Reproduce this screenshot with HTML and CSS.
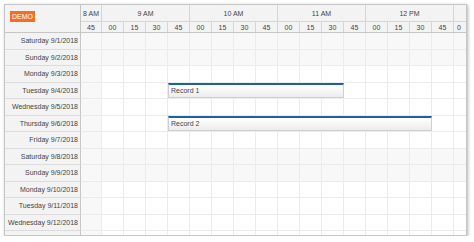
FILE: index.html
```html
<!DOCTYPE html>
<html lang="en">
<head>
<meta charset="UTF-8">
<title>Scheduler</title>
<link rel="stylesheet" href="styles.css">
</head>
<body>
  <div class="scheduler">
    <div class="header">
      <div class="corner"><span class="demo">DEMO</span></div>
      <div class="timeline-head">
        <div class="hours">
          <div class="cell w21">8 AM</div>
          <div class="cell hour">9 AM</div>
          <div class="cell hour">10 AM</div>
          <div class="cell hour">11 AM</div>
          <div class="cell hour">12 PM</div>
          <div class="cell rest"></div>
        </div>
        <div class="minutes">
          <div class="cell w21">45</div>
          <div class="cell">00</div><div class="cell">15</div><div class="cell">30</div><div class="cell">45</div>
          <div class="cell">00</div><div class="cell">15</div><div class="cell">30</div><div class="cell">45</div>
          <div class="cell">00</div><div class="cell">15</div><div class="cell">30</div><div class="cell">45</div>
          <div class="cell">00</div><div class="cell">15</div><div class="cell">30</div><div class="cell">45</div>
          <div class="cell rest">0</div>
        </div>
      </div>
    </div>

    <div class="row weekend"><div class="label">Saturday 9/1/2018</div><div class="lane"></div></div>
    <div class="row weekend"><div class="label">Sunday 9/2/2018</div><div class="lane"></div></div>
    <div class="row"><div class="label">Monday 9/3/2018</div><div class="lane"></div></div>
    <div class="row">
      <div class="label">Tuesday 9/4/2018</div>
      <div class="lane"><div class="event" style="left: 87px; width: 176px;">Record 1</div></div>
    </div>
    <div class="row"><div class="label">Wednesday 9/5/2018</div><div class="lane"></div></div>
    <div class="row">
      <div class="label">Thursday 9/6/2018</div>
      <div class="lane"><div class="event" style="left: 87px; width: 264px;">Record 2</div></div>
    </div>
    <div class="row"><div class="label">Friday 9/7/2018</div><div class="lane"></div></div>
    <div class="row weekend"><div class="label">Saturday 9/8/2018</div><div class="lane"></div></div>
    <div class="row weekend"><div class="label">Sunday 9/9/2018</div><div class="lane"></div></div>
    <div class="row"><div class="label">Monday 9/10/2018</div><div class="lane"></div></div>
    <div class="row"><div class="label">Tuesday 9/11/2018</div><div class="lane"></div></div>
    <div class="row"><div class="label">Wednesday 9/12/2018</div><div class="lane"></div></div>
    <div class="row"><div class="label"></div><div class="lane"></div></div>
  </div>
</body>
</html>
```

FILE: styles.css
```css
body {
  margin: 0;
  background-color: #fff;
}
.scheduler {
  margin: 4px 0 0 4px;
  width: 463px;
  height: 232px;
  box-sizing: border-box;
  border: 1px solid #c6c6c6;
  box-shadow: 1px 1px 3px rgba(0, 0, 0, 0.3);
  overflow: hidden;
  background-color: #fff;
  font-family: "Liberation Sans", Arial, sans-serif;
  font-size: 7px;
  color: #444;
}
.header {
  display: flex;
  height: 28px;
  border-bottom: 1px solid #c6c6c6;
  box-sizing: border-box;
}
.corner {
  flex: 0 0 76px;
  box-sizing: border-box;
  border-right: 1px solid #c6c6c6;
  background-color: #f3f3f3;
  padding: 6px 0 0 5px;
}
.demo {
  display: inline-block;
  background-color: #f37021;
  color: #fff;
  padding: 2px 2px;
  line-height: 7px;
}
.timeline-head {
  flex: 1;
  background-color: #f3f3f3;
  overflow: hidden;
}
.hours, .minutes {
  display: flex;
  white-space: nowrap;
}
.hours {
  height: 16px;
  border-bottom: 1px solid #d6d6d6;
}
.minutes {
  height: 11px;
}
.cell {
  flex: 0 0 22px;
  box-sizing: border-box;
  border-right: 1px solid #d6d6d6;
  display: flex;
  align-items: center;
  justify-content: center;
}
.cell.w21 {
  flex-basis: 21px;
}
.cell.hour {
  flex-basis: 88px;
}
.cell.rest {
  flex: 1 0 0;
  border-right: none;
  justify-content: flex-start;
  padding-left: 3px;
}
.row {
  display: flex;
  height: 16.5px;
}
.label {
  flex: 0 0 76px;
  box-sizing: border-box;
  border-right: 1px solid #c6c6c6;
  border-bottom: 1px solid #dcdcdc;
  background-color: #f3f3f3;
  padding-right: 2px;
  display: flex;
  align-items: center;
  justify-content: flex-end;
  white-space: nowrap;
}
.lane {
  flex: 1;
  position: relative;
  box-sizing: border-box;
  border-bottom: 1px solid #ececec;
  background-image:
    repeating-linear-gradient(to right, transparent 0 21px, #ececec 21px 22px),
    linear-gradient(#f8f8f8, #f8f8f8);
  background-position: -1px 0, 0 0;
  background-size: auto, 20px 100%;
  background-repeat: repeat, no-repeat;
}
.weekend .lane {
  background-color: #f8f8f8;
}
.event {
  position: absolute;
  top: 0;
  bottom: 0;
  box-sizing: border-box;
  border: 1px solid #cfcfcf;
  border-top: 2px solid #1d5fa0;
  background: linear-gradient(#fff, #ececec);
  padding-left: 2px;
  display: flex;
  align-items: center;
  white-space: nowrap;
  overflow: hidden;
}
```
